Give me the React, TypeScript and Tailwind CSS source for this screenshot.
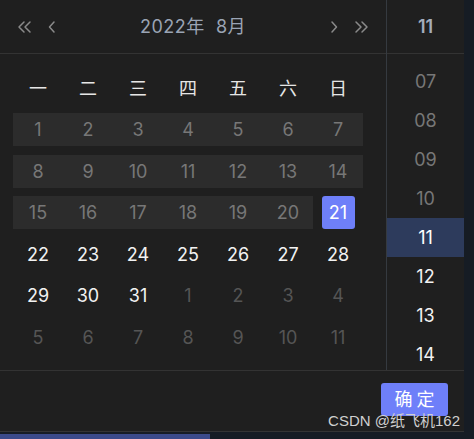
import React from "react";

const font = { fontFamily: 'Inter, "Noto Sans CJK SC", sans-serif' };

type Cell = { d: number; kind: "prev" | "cur" | "next"; band?: boolean; sel?: boolean };

const rows: Cell[][] = [
  [1, 2, 3, 4, 5, 6, 7].map((d) => ({ d, kind: "cur" as const, band: true })),
  [8, 9, 10, 11, 12, 13, 14].map((d) => ({ d, kind: "cur" as const, band: true })),
  [15, 16, 17, 18, 19, 20].map((d) => ({ d, kind: "cur" as const, band: true })).concat([{ d: 21, kind: "cur", sel: true }]),
  [22, 23, 24, 25, 26, 27, 28].map((d) => ({ d, kind: "cur" as const })),
  [
    { d: 29, kind: "cur" },
    { d: 30, kind: "cur" },
    { d: 31, kind: "cur" },
    { d: 1, kind: "next" },
    { d: 2, kind: "next" },
    { d: 3, kind: "next" },
    { d: 4, kind: "next" },
  ],
  [5, 6, 7, 8, 9, 10, 11].map((d) => ({ d, kind: "next" as const })),
];

const week = ["一", "二", "三", "四", "五", "六", "日"];
const hours = ["07", "08", "09", "10", "11", "12", "13", "14"];

function Chev({ double, dir }: { double?: boolean; dir: "l" | "r" }) {
  const flip = dir === "r" ? "scale(-1,1) translate(-16,0)" : undefined;
  return (
    <svg width="16" height="16" viewBox="0 0 16 16" fill="none" stroke="#8a8a8a" strokeWidth="1.5" strokeLinecap="round" strokeLinejoin="round">
      <g transform={flip}>
        {double ? (
          <>
            <path d="M8 3 L3 8 L8 13" />
            <path d="M14 3 L9 8 L14 13" />
          </>
        ) : (
          <path d="M10 3 L5.5 8 L10 13" />
        )}
      </g>
    </svg>
  );
}

export default function App() {
  return (
    <div className="relative w-[474px] h-[439px] overflow-hidden bg-[#161c24]" style={font}>
      <div className="w-[464px] h-[432px] bg-[#1f1f1f] flex flex-col border-b border-[#343434]">
        <div className="flex h-[371px] border-b border-[#333]">
          {/* calendar */}
          <div className="w-[387px] border-r border-[#353a40] flex flex-col">
            <div className="h-[54px] border-b border-[#333] flex items-center px-[16px]">
              <div className="flex items-center gap-[16px]">
                <Chev double dir="l" />
                <div className="-ml-[4px]"><Chev dir="l" /></div>
              </div>
              <div className="flex-1 text-center text-[18px] text-[#9aa4b4] tracking-[0.5px]">2022年&nbsp;&nbsp;8月</div>
              <div className="flex items-center gap-[16px]">
                <div className="-mr-[4px]"><Chev dir="r" /></div>
                <Chev double dir="r" />
              </div>
            </div>
            <div className="pl-[13px] pt-[13.5px]">
              <div className="flex h-[41.5px] items-center">
                {week.map((w) => (
                  <div key={w} className="w-[50px] text-center text-[18px] text-[#e6e6e6]">{w}</div>
                ))}
              </div>
              {rows.map((r, i) => (
                <div key={i} className="flex h-[41.5px] items-center">
                  {r.map((c, j) => (
                    <div
                      key={j}
                      className={
                        "w-[50px] h-[33px] flex items-center justify-center text-[18px] " +
                        (c.band ? "bg-[#2c2c2c] text-[#777] " : "") +
                        (!c.band && c.kind === "cur" ? "text-[#f2f2f2] " : "") +
                        (c.kind === "next" ? "text-[#555] " : "")
                      }
                    >
                      {c.sel ? (
                        <div className="w-[33px] h-[33px] rounded-[3px] bg-[#6e7ff9] text-white flex items-center justify-center">{c.d}</div>
                      ) : (
                        c.d
                      )}
                    </div>
                  ))}
                </div>
              ))}
            </div>
          </div>
          {/* time column */}
          <div className="w-[77px] flex flex-col overflow-hidden">
            <div className="h-[54px] shrink-0 border-b border-[#333] flex items-center justify-center text-[18px] font-semibold text-[#a3adbd]">11</div>
            <div className="pt-[7.5px]">
              {hours.map((h, i) => (
                <div
                  key={h}
                  className={
                    "h-[39px] flex items-center justify-center text-[18px] " +
                    (i < 4 ? "text-[#777]" : i === 4 ? "bg-[#2d3b5c] text-white" : "text-[#f2f2f2]")
                  }
                >
                  {h}
                </div>
              ))}
            </div>
          </div>
        </div>
        <div className="flex-1 flex justify-end items-start pt-[12px] pr-[16px]">
          <div className="w-[67px] h-[33px] rounded-[3px] bg-[#6e7ff9] text-white text-[18px] flex items-center justify-center tracking-[4px] pl-[4px]">确定</div>
        </div>
      </div>
      <div className="absolute left-0 top-[434px] w-[210px] h-[5px] bg-[#3b4a8a]" />
      <div className="absolute right-[14px] top-[409px] text-[15px] text-[#d0d0d0] leading-[24px]" style={{ fontFamily: '"Liberation Sans", "Noto Sans CJK SC", sans-serif' }}>CSDN @纸飞机162</div>
    </div>
  );
}
